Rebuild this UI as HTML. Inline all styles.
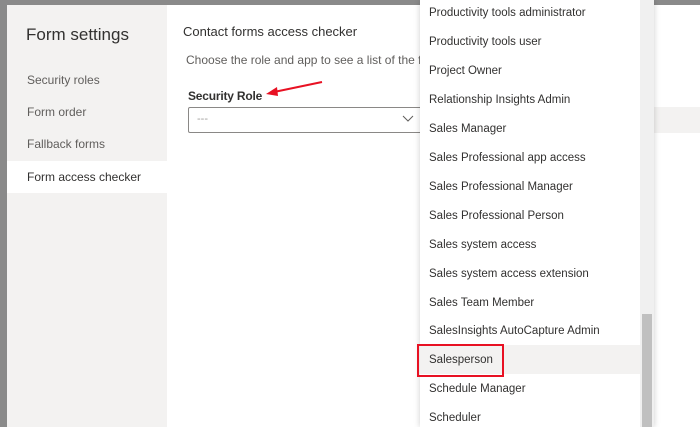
<!DOCTYPE html>
<html><head><style>
*{margin:0;padding:0;box-sizing:border-box}
html,body{width:700px;height:427px;overflow:hidden}
body{position:relative;background:#8a8a8a;font-family:"Liberation Sans","DejaVu Sans",sans-serif;color:#323130}
.panel{position:absolute;left:7px;top:5px;width:693px;height:422px;background:#fff;overflow:hidden}
.side{position:absolute;left:0;top:0;width:160px;height:422px;background:#f3f2f1}
.side h1{position:absolute;left:19px;top:20px;font-size:17px;font-weight:normal;color:#323130}
.nav{position:absolute;left:0;width:160px;height:32px;line-height:32px;padding-left:20px;font-size:12px;color:#605e5c}
.nav.sel{background:#fff;color:#323130}
.t{position:absolute;font-size:13px}
.item{position:absolute;left:429px;font-size:11.5px;color:#323130;line-height:16px}
</style></head><body>
<div class="panel">
 <div class="side">
  <h1>Form settings</h1>
  <div class="nav" style="top:59px">Security roles</div>
  <div class="nav" style="top:91px">Form order</div>
  <div class="nav" style="top:123px">Fallback forms</div>
  <div class="nav sel" style="top:156px">Form access checker</div>
 </div>
 <div class="t" style="left:176px;top:19px;color:#323130">Contact forms access checker</div>
 <div class="t" style="left:179px;top:48px;font-size:12px;color:#605e5c">Choose the role and app to see a list of the forms</div>
 <div class="t" style="left:181px;top:84px;font-size:12px;font-weight:bold;color:#323130;letter-spacing:-0.2px">Security Role</div>
 <div style="position:absolute;left:181px;top:102px;width:240px;height:26px;border:1px solid #8a8886;border-radius:2px"><span style="position:absolute;left:8px;top:5px;font-size:11px;color:#a19f9d">---</span></div>
 <div style="position:absolute;left:647px;top:102px;width:60px;height:26px;background:#f3f2f1"></div>
</div>
<svg style="position:absolute;left:0;top:0" width="700" height="427">
 <line x1="322" y1="82" x2="274" y2="92" stroke="#e81123" stroke-width="2"/>
 <polygon points="266,94 277,87 278,96" fill="#e81123"/>
 <polyline points="403,116 408,121 413,116" fill="none" stroke="#605e5c" stroke-width="1"/>
</svg>
<div style="position:absolute;left:420px;top:0;width:234px;height:427px;background:#fff;box-shadow:0 0 6px rgba(0,0,0,.2)">
 <div style="position:absolute;left:220px;top:0;width:14px;height:427px;background:#f0f0f0"></div>
 <div style="position:absolute;left:222px;top:314px;width:10px;height:113px;background:#c0c0c0"></div>
 <div style="position:absolute;left:0;top:345px;width:220px;height:29px;background:#f3f2f1"></div>
</div>
<div class="item" style="top:5px">Productivity tools administrator</div>
<div class="item" style="top:34px">Productivity tools user</div>
<div class="item" style="top:63px">Project Owner</div>
<div class="item" style="top:92px">Relationship Insights Admin</div>
<div class="item" style="top:121px">Sales Manager</div>
<div class="item" style="top:150px">Sales Professional app access</div>
<div class="item" style="top:179px">Sales Professional Manager</div>
<div class="item" style="top:208px">Sales Professional Person</div>
<div class="item" style="top:237px">Sales system access</div>
<div class="item" style="top:266px">Sales system access extension</div>
<div class="item" style="top:295px">Sales Team Member</div>
<div class="item" style="top:323px">SalesInsights AutoCapture Admin</div>
<div class="item" style="top:352px">Salesperson</div>
<div class="item" style="top:381px">Schedule Manager</div>
<div class="item" style="top:410px">Scheduler</div>
<div style="position:absolute;left:417px;top:344px;width:87px;height:33px;border:2px solid #e81123"></div>
</body></html>
